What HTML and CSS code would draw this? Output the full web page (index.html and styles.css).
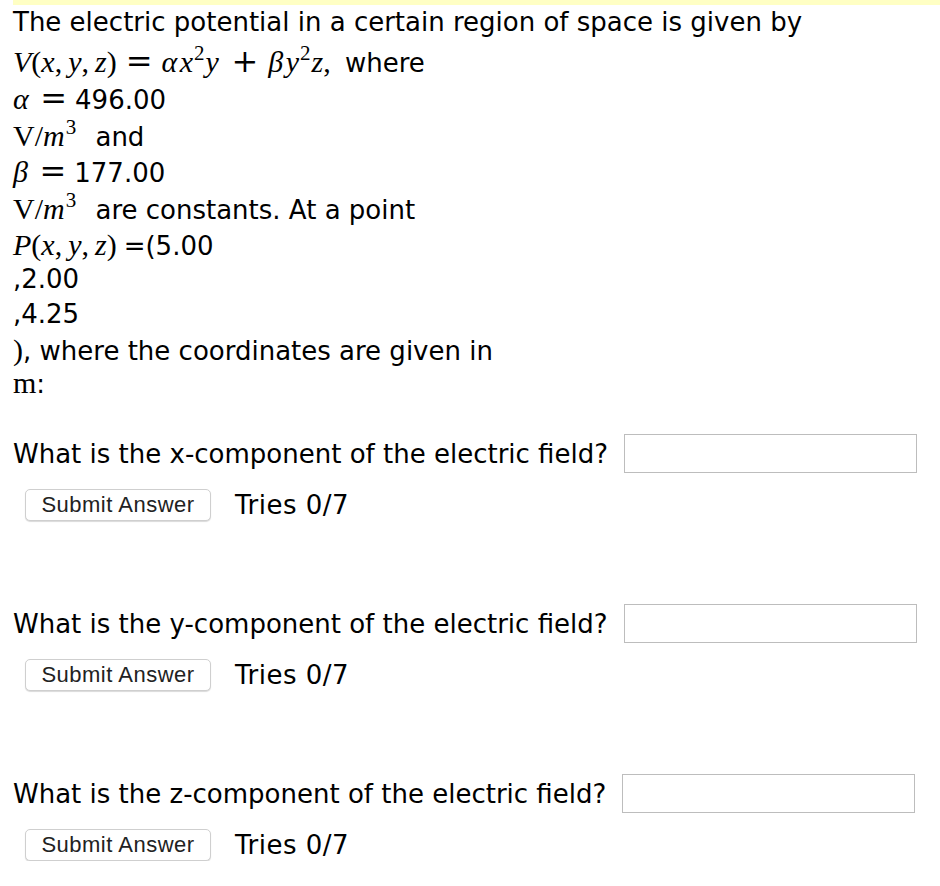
FILE: index.html
```html
<!DOCTYPE html>
<html>
<head>
<meta charset="utf-8">
<link rel="stylesheet" href="styles.css">
</head>
<body>
<div class="topbar"></div>
<div class="problem">
  <div class="line l1">The electric potential in a certain region of space is given by</div>
  <div class="line l2"><span class="m f"><i>V</i>(<i>x</i>,<span class="th"></span><i>y</i>,<span class="th"></span><i>z</i>)<span class="rel">=</span><i class="w">α</i><i>x</i><sup>2</sup><i class="w">y</i><span class="bin">+</span><i class="w">β</i><i>y</i><sup>2</sup><i>z</i>,</span> where</div>
  <div class="line"><span class="m"><i class="w">α</i><span class="rel end">=</span></span>496.00</div>
  <div class="line tall"><span class="m unit"><span class="up">V</span>/<i>m</i><sup>3</sup></span> and</div>
  <div class="line"><span class="m"><i class="w">β</i><span class="rel end">=</span></span>177.00</div>
  <div class="line tall"><span class="m unit"><span class="up">V</span>/<i>m</i><sup>3</sup></span> are constants. At a point</div>
  <div class="line"><span class="m p"><i>P</i>(<i>x</i>,<span class="th"></span><i>y</i>,<span class="th"></span><i>z</i>)</span>=(5.00</div>
  <div class="line">,2.00</div>
  <div class="line">,4.25</div>
  <div class="line l10"><span class="m">)</span>, where the coordinates are given in</div>
  <div class="line"><span class="m">m</span>:</div>
</div>

<div class="question first">
  <div class="q-row">
    <span class="q-text">What is the x-component of the electric field?</span>
    <input class="answer" type="text">
  </div>
  <div class="a-row">
    <button class="submit">Submit Answer</button>
    <span class="tries">Tries 0/7</span>
  </div>
</div>

<div class="question">
  <div class="q-row">
    <span class="q-text">What is the y-component of the electric field?</span>
    <input class="answer" type="text">
  </div>
  <div class="a-row">
    <button class="submit">Submit Answer</button>
    <span class="tries">Tries 0/7</span>
  </div>
</div>

<div class="question">
  <div class="q-row">
    <span class="q-text">What is the z-component of the electric field?</span>
    <input class="answer" type="text">
  </div>
  <div class="a-row">
    <button class="submit">Submit Answer</button>
    <span class="tries">Tries 0/7</span>
  </div>
</div>
</body>
</html>
```

FILE: styles.css
```css
html, body {
  margin: 0;
  padding: 0;
  background: #ffffff;
}

body {
  font-family: "DejaVu Sans", Verdana, sans-serif;
  font-size: 26px;
  color: #000;
}

.topbar {
  margin-left: 13px;
  height: 5px;
  background: #ffffc4;
}

.problem {
  padding: 0 13px;
}

.line {
  height: 35px;
  line-height: 35px;
  white-space: nowrap;
}

.line.l1 {
  height: 34px;
  line-height: 34px;
}

.line.l2 {
  height: 42px;
  line-height: 46px;
}

.line.tall {
  height: 38px;
  line-height: 40px;
}

.line.l10 {
  height: 33px;
}

.m {
  font-family: "Liberation Serif", "Times New Roman", serif;
  font-size: 30px;
}

.m.f {
  margin-right: 6px;
}

.m.unit {
  margin-right: 10px;
}

.m.p {
  margin-right: 7px;
}

.m i {
  font-style: italic;
}

.m i.w {
  letter-spacing: 2.5px;
}

.m .up {
  font-style: normal;
}

.m sup {
  font-size: 21px;
  line-height: 0;
  vertical-align: 12px;
  margin-left: 1px;
  margin-right: 1px;
}

.th {
  display: inline-block;
  width: 6px;
}

.rel,
.bin {
  font-family: "DejaVu Serif", "Liberation Serif", serif;
  font-size: 32px;
  line-height: 0;
}

.rel {
  margin: 0 9px;
}

.rel.end {
  margin: 0 8px 0 9px;
}

.bin {
  margin: 0 10px;
}

.question {
  padding-left: 13px;
  margin-top: 83px;
}

.question.first {
  margin-top: 34px;
}

.q-row {
  display: flex;
  align-items: center;
  gap: 16px;
  height: 39px;
}

.answer {
  width: 293px;
  height: 39px;
  box-sizing: border-box;
  border: 1px solid #bdbdbd;
  margin: 0;
  padding: 0;
}

.a-row {
  display: flex;
  align-items: center;
  gap: 24px;
  margin-top: 16px;
  padding-left: 12px;
  height: 32px;
}

.submit {
  width: 186px;
  height: 32px;
  box-sizing: border-box;
  background: #fff;
  border: 1px solid #cfcfcf;
  border-radius: 5px;
  box-shadow: 0 1px 1px rgba(0,0,0,0.15);
  font-family: "Liberation Sans", Arial, sans-serif;
  font-size: 22px;
  letter-spacing: 0.5px;
  color: #222;
  padding: 0;
}

.tries {
  font-size: 26px;
  letter-spacing: 0.5px;
}
```
